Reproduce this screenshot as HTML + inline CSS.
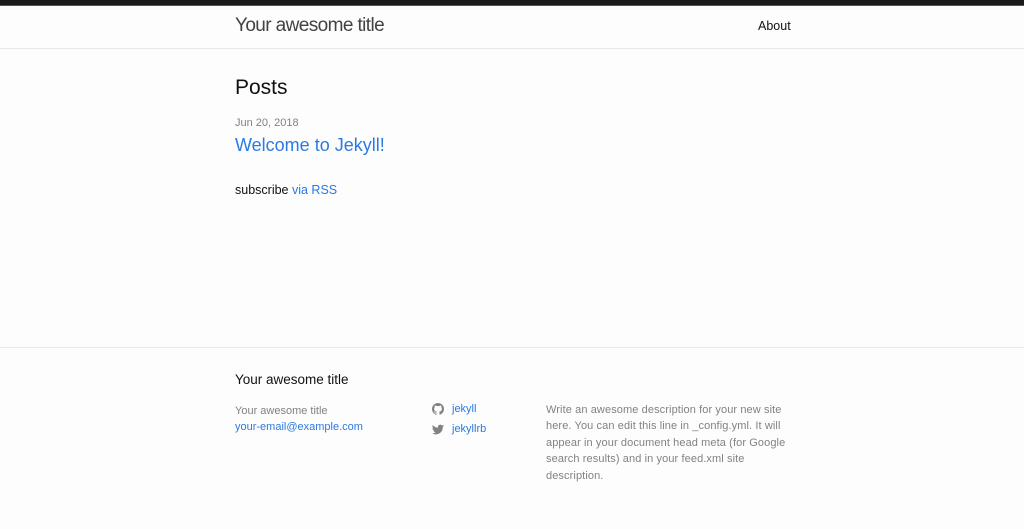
<!DOCTYPE html>
<html><head><meta charset="utf-8"><style>
*{margin:0;padding:0;box-sizing:border-box}
body{width:1024px;height:529px;background:#fdfdfd;font-family:"Liberation Sans",sans-serif;color:#111;position:relative;overflow:hidden}
.a{position:absolute;white-space:nowrap}
a{color:#2a7ae2;text-decoration:none}
</style></head><body>
<div class="a" style="left:0;top:0;width:1024px;height:5px;background:#1a1a1a"></div>
<div class="a" style="left:0;top:5px;width:1024px;height:1px;background:#555"></div>
<div class="a" style="left:0;top:48px;width:1024px;height:1px;background:#e8e8e8"></div>
<div class="a" style="left:235px;top:15px;font-size:19px;color:#424242;letter-spacing:-0.6px">Your awesome title</div>
<div class="a" style="left:758px;top:19px;font-size:12.5px;color:#111">About</div>
<div class="a" style="left:235px;top:76px;font-size:21px;color:#111">Posts</div>
<div class="a" style="left:235px;top:117px;font-size:11px;color:#828282">Jun 20, 2018</div>
<div class="a" style="left:235px;top:135px;font-size:18px"><a>Welcome to Jekyll!</a></div>
<div class="a" style="left:235px;top:183px;font-size:12.5px">subscribe <a>via RSS</a></div>
<div class="a" style="left:0;top:347px;width:1024px;height:1px;background:#e8e8e8"></div>
<div class="a" style="left:235px;top:372px;font-size:13.5px">Your awesome title</div>
<div class="a" style="left:235px;top:403px;font-size:11px;color:#828282;line-height:16px">Your awesome title<br><a>your-email@example.com</a></div>
<svg class="a" style="left:432px;top:403px" width="12" height="12" viewBox="0 0 16 16"><path fill="#828282" d="M8 0C3.58 0 0 3.58 0 8c0 3.540 2.29 6.53 5.47 7.59.4.07.55-.17.55-.38v-1.33c-2.23.48-2.7-1.070-2.7-1.07-.36-.92-.89-1.17-.89-1.17-.73-.5.06-.49.06-.49.8.06 1.230.83 1.23.83.71 1.23 1.87.87 2.33.66.07-.52.28-.87.5-1.07-1.78-.2-3.64-.89-3.64-3.95 0-.87.31-1.59.82-2.15-.08-.2-.36-1.02.08-2.12 0 0 .67-.21 2.2.82a7.6 7.6 0 0 1 4 0c1.53-1.04 2.2-.82 2.2-.82.44 1.1.16 1.92.08 2.12.51.56.82 1.27.82 2.15 0 3.07-1.87 3.75-3.65 3.95.29.25.54.73.54 1.48v2.2c0 .21.15.46.55.38A8 8 0 0 0 16 8c0-4.42-3.58-8-8-8z"/></svg>
<div class="a" style="left:452px;top:403px;font-size:11px"><a>jekyll</a></div>
<svg class="a" style="left:432px;top:424px" width="12" height="11" viewBox="0 0 16 13"><path fill="#828282" d="M16 1.54a6.6 6.6 0 0 1-1.89.52A3.3 3.3 0 0 0 15.56.24a6.6 6.6 0 0 1-2.090.8A3.29 3.29 0 0 0 7.88 4.03 9.3 9.3 0 0 1 1.11.6a3.29 3.29 0 0 0 1.02 4.39A3.3 3.3 0 0 1 .64 4.58v.04a3.29 3.29 0 0 0 2.64 3.22 3.3 3.3 0 0 1-1.48.06 3.29 3.29 0 0 0 3.07 2.28A6.6 6.6 0 0 1 0 11.54 9.3 9.3 0 0 0 5.03 13c6.04 0 9.34-5 9.34-9.34v-.42A6.7 6.7 0 0 0 16 1.54z"/></svg>
<div class="a" style="left:452px;top:423px;font-size:11px"><a>jekyllrb</a></div>
<div class="a" style="left:546px;top:402px;font-size:11px;color:#828282;line-height:16.4px;white-space:normal;width:252px;letter-spacing:0.1px">Write an awesome description for your new site here. You can edit this line in _config.yml. It will appear in your document head meta (for Google search results) and in your feed.xml site description.</div>
</body></html>
